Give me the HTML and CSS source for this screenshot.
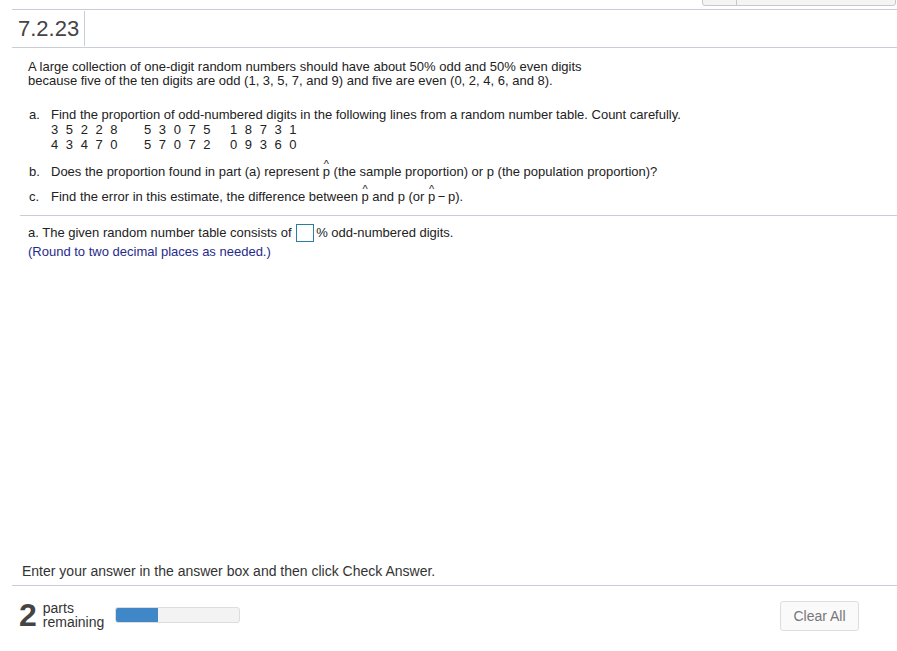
FILE: index.html
```html
<!DOCTYPE html>
<html>
<head>
<meta charset="utf-8">
<link rel="stylesheet" href="styles.css">
</head>
<body>
<div class="page">
  <div class="topbox"><span class="tb-left"></span><span class="tb-right"></span></div>
  <div class="header">
    <div class="qnum">7.2.23</div>
  </div>
  <div class="question">
    <p class="intro">A large collection of one-digit random numbers should have about 50% odd and 50% even digits<br>because five of the ten digits are odd (1, 3, 5, 7, and 9) and five are even (0, 2, 4, 6, and 8).</p>
    <div class="item">
      <span class="lbl">a.</span>
      <div class="itext">
        <div>Find the proportion of odd-numbered digits in the following lines from a random number table. Count carefully.</div>
        <div class="digits">
          <div class="drow"><span>3 5 2 2 8</span><span>5 3 0 7 5</span><span>1 8 7 3 1</span></div>
          <div class="drow"><span>4 3 4 7 0</span><span>5 7 0 7 2</span><span>0 9 3 6 0</span></div>
        </div>
      </div>
    </div>
    <div class="item item-b">
      <span class="lbl">b.</span>
      <div class="itext">Does the proportion found in part (a) represent <span class="hat">p</span> (the sample proportion) or p (the population proportion)?</div>
    </div>
    <div class="item item-c">
      <span class="lbl">c.</span>
      <div class="itext">Find the error in this estimate, the difference between <span class="hat">p</span> and p (or <span class="hat">p</span>&thinsp;&minus;&thinsp;p).</div>
    </div>
  </div>
  <div class="answer">
    <div class="aline">a. The given random number table consists of <span class="box"></span>% odd-numbered digits.</div>
    <div class="hint">(Round to two decimal places as needed.)</div>
  </div>
  <div class="spacer"></div>
  <div class="instr">Enter your answer in the answer box and then click Check Answer.</div>
  <div class="footer">
    <div class="parts">
      <span class="big">2</span>
      <span class="ptxt"><span class="pl">parts</span><span class="pl">remaining</span></span>
      <span class="bar"><span class="fill"></span></span>
    </div>
    <button class="clear">Clear All</button>
  </div>
</div>
</body>
</html>
```
FILE: styles.css
```css
html, body {
  margin: 0;
  padding: 0;
  background: #fff;
}
body {
  font-family: "Liberation Sans", Arial, sans-serif;
  color: #333;
  width: 897px;
  height: 651px;
  overflow: hidden;
}
.page {
  position: relative;
  height: 651px;
  display: flex;
  flex-direction: column;
}
.topbox {
  position: absolute;
  left: 702px;
  top: -2px;
  width: 192px;
  height: 6px;
  border: 1px solid #c8c8c8;
  border-radius: 0 0 3px 3px;
  background: #f4f4f4;
  display: flex;
}
.tb-left {
  width: 33px;
  border-right: 1px solid #c8c8c8;
}
.header {
  margin-top: 9px;
  margin-left: 12px;
  border-top: 1px solid #c9cdd8;
  border-bottom: 1px solid #c9cdd8;
  height: 37px;
  display: flex;
  align-items: stretch;
}
.qnum {
  font-size: 22px;
  color: #444;
  padding: 0 0 0 6px;
  width: 66px;
  border-right: 1px solid #c9cdd8;
  margin: 1px 0 1px 0;
  line-height: 35px;
}
.question {
  margin-left: 28px;
  font-size: 13px;
  color: #222;
  line-height: 14px;
  padding-top: 12px;
}
.intro {
  margin: 0 0 20px 0;
}
.item {
  display: flex;
}
.lbl {
  width: 22px;
  flex: none;
  padding-left: 1px;
}
.digits {
  line-height: 15px;
  padding-top: 0;
}
.drow {
  display: flex;
}
.drow span {
  width: 93px;
  word-spacing: 4px;
}
.drow span:nth-child(2) {
  width: 86px;
}
.item-b {
  margin-top: 13px;
}
.item-c {
  margin-top: 11px;
}
.hat {
  position: relative;
  display: inline-block;
}
.hat::before {
  content: "^";
  position: absolute;
  left: 0;
  right: 0;
  text-align: center;
  top: -8px;
  font-size: 11px;
}
.answer {
  margin-left: 20px;
  margin-top: 11px;
  border-top: 1px solid #c9cdd8;
  padding-left: 8px;
  padding-top: 8px;
  font-size: 13px;
  color: #222;
}
.aline {
  line-height: 18px;
  display: flex;
  align-items: center;
  white-space: pre;
}
.box {
  display: inline-block;
  width: 16px;
  height: 16px;
  border: 1px solid #2a7f9e;
  margin: 0 2px 0 1px;
}
.hint {
  color: #1f2b8c;
  margin-top: 2px;
  line-height: 16px;
}
.spacer {
  flex: 1;
}
.instr {
  margin-left: 22px;
  font-size: 14px;
  color: #333;
  line-height: 16px;
  padding-bottom: 6px;
}
.footer {
  margin-left: 12px;
  border-top: 1px solid #c9cdd8;
  height: 66px;
  display: flex;
  justify-content: space-between;
  align-items: flex-start;
  padding-top: 15px;
  box-sizing: border-box;
}
.parts {
  display: flex;
  align-items: center;
  padding-left: 7px;
  margin-top: 0;
}
.big {
  font-size: 32px;
  font-weight: bold;
  color: #444;
  line-height: 28px;
}
.ptxt {
  font-size: 14px;
  line-height: 14px;
  color: #333;
  margin-left: 6px;
  margin-top: -1px;
  display: flex;
  flex-direction: column;
}
.pl {
  display: block;
  height: 14px;
  line-height: 14px;
}
.bar {
  margin-left: 11px;
  width: 123px;
  height: 14px;
  border: 1px solid #ddd;
  border-radius: 3px;
  background: #f3f3f3;
  display: flex;
  overflow: hidden;
}
.fill {
  width: 42px;
  background: #3f87c6;
}
.clear {
  margin-right: 38px;
  width: 79px;
  height: 30px;
  border: 1px solid #ddd;
  border-radius: 3px;
  background: #fafafa;
  color: #777;
  font-family: "Liberation Sans", Arial, sans-serif;
  font-size: 14px;
  padding: 0;
  margin-top: 0;
}
```
